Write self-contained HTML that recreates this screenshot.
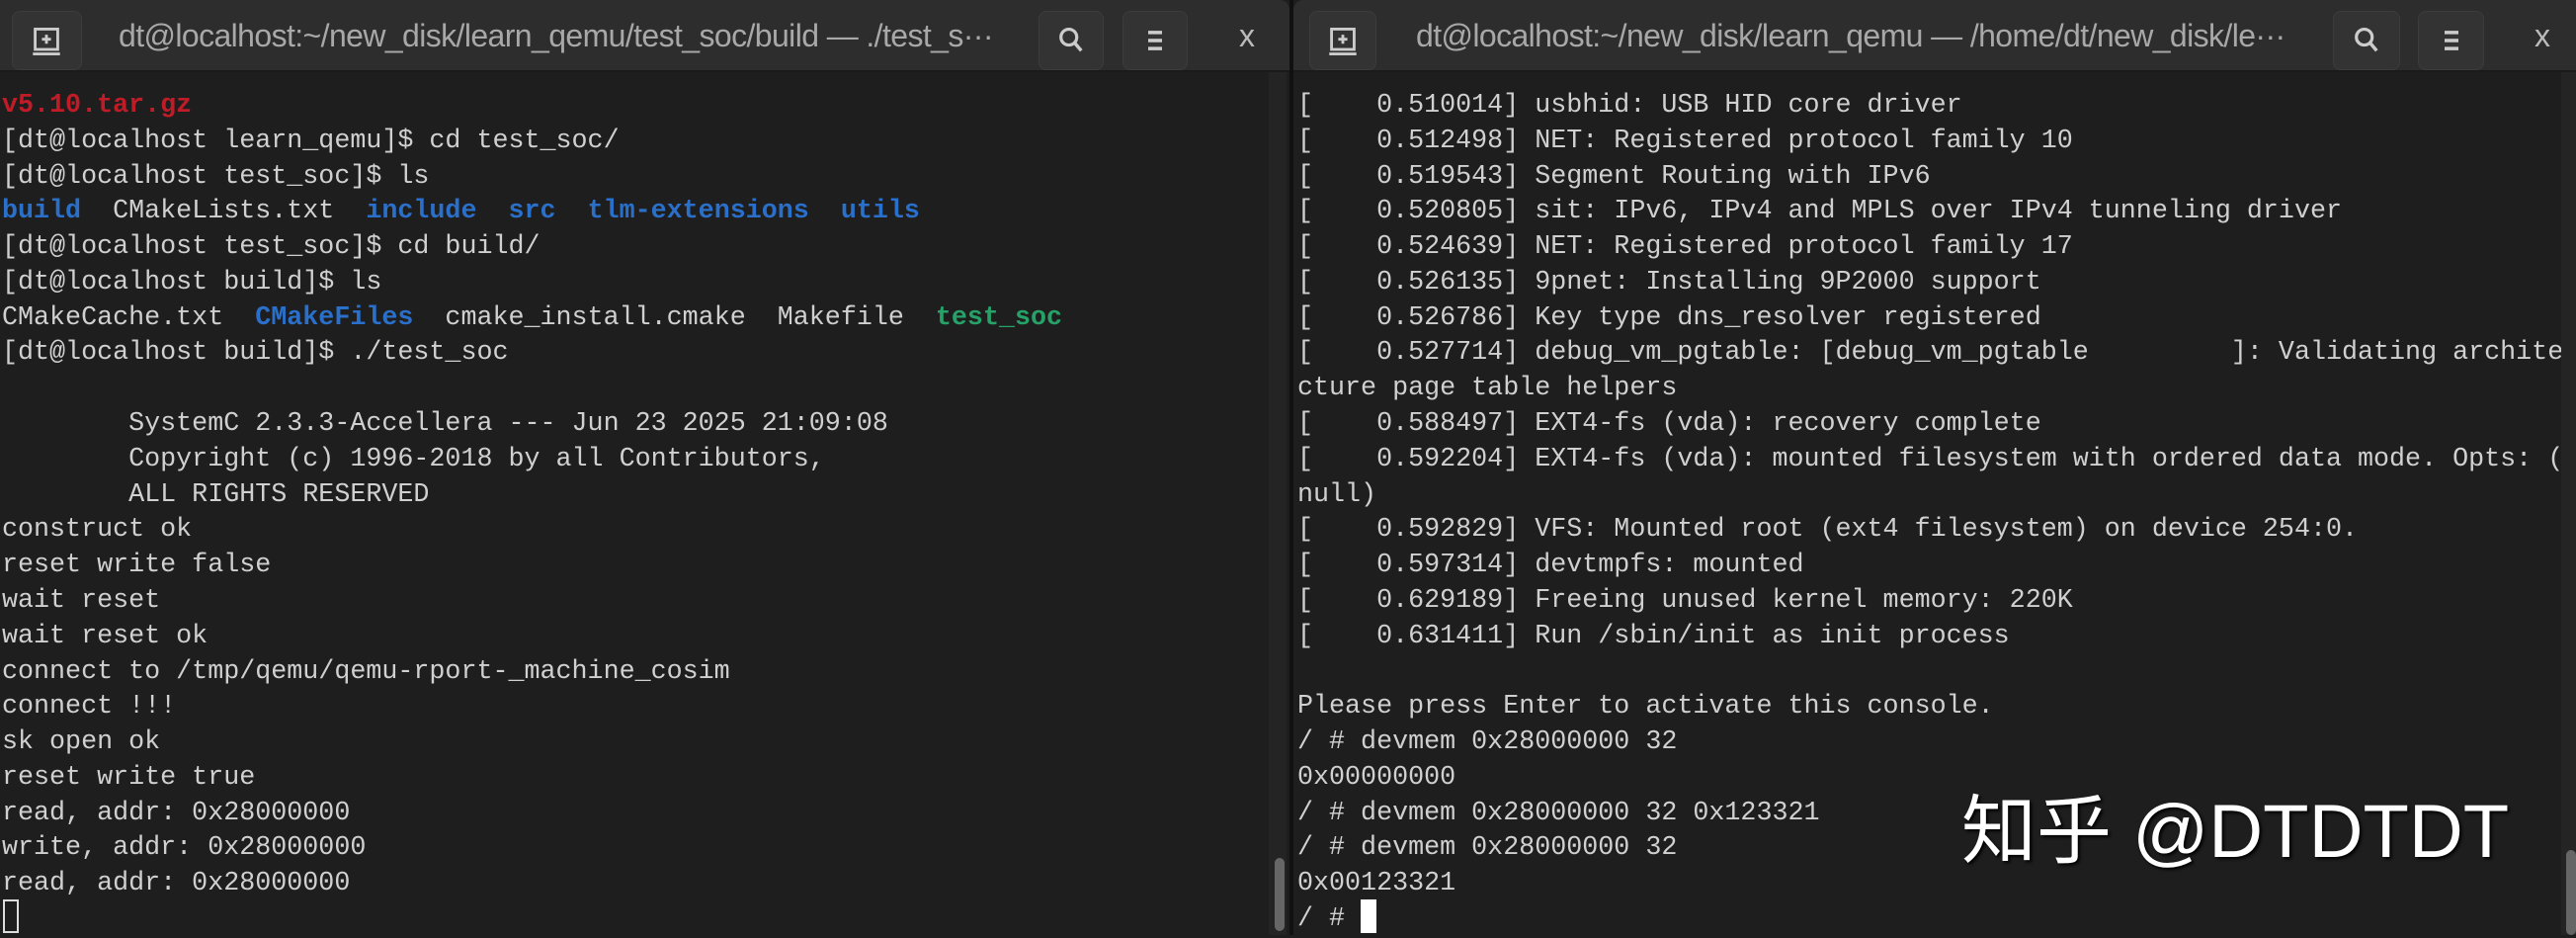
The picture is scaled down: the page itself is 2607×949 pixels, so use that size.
<!DOCTYPE html>
<html><head><meta charset="utf-8">
<style>
*{margin:0;padding:0;box-sizing:border-box}
body{width:2607px;height:946px;background:#1e1e1e;overflow:hidden;position:relative;font-family:"Liberation Mono",monospace}
.hdr{position:absolute;top:0;height:73px;background:#2d2d2d;border-bottom:2px solid #1a1a1a}
.btn{position:absolute;top:11px;height:60px;border:1px solid #3c3c3c;border-radius:8px;background:#333;}
.title{position:absolute;top:0;line-height:73px;font-family:"Liberation Sans",sans-serif;font-size:32px;color:#a8a8a8;white-space:nowrap;letter-spacing:-0.6px}
.x{position:absolute;top:0;line-height:73px;font-family:"Liberation Sans",sans-serif;font-size:32px;color:#bbb}
.term{position:absolute;top:90px;font-size:26.7px;line-height:35.78px;color:#d0d0d0;white-space:pre}
.r{color:#c01c28;font-weight:bold}.b{color:#2a6fc9;font-weight:bold}.g{color:#26a269;font-weight:bold}
svg{position:absolute}
</style></head><body>
<!-- left window -->
<div class="hdr" style="left:0;width:1305px;border-top-right-radius:10px"></div>
<div class="btn" style="left:12px;width:71px"></div>
<svg style="left:31px;top:26px" width="32" height="32" viewBox="0 0 28 28"><rect x="4" y="3" width="20" height="18" fill="none" stroke="#ccc" stroke-width="2.5"/><line x1="2" y1="25" x2="26" y2="25" stroke="#ccc" stroke-width="2.5"/><path d="M14 8v8M10 12h8" stroke="#ccc" stroke-width="2.5"/></svg>
<div class="title" style="left:120px">dt@localhost:~/new_disk/learn_qemu/test_soc/build — ./test_s···</div>
<div class="btn" style="left:1051px;width:66px"></div>
<svg style="left:1068px;top:25px" width="32" height="32" viewBox="0 0 28 28"><circle cx="12" cy="11" r="7" fill="none" stroke="#ccc" stroke-width="2.8"/><path d="M17 16l6 7" stroke="#ccc" stroke-width="3"/></svg>
<div class="btn" style="left:1136px;width:66px"></div>
<svg style="left:1155px;top:27px" width="28" height="28" viewBox="0 0 24 24"><path d="M6 5h12M6 12h12M6 19h12" stroke="#ccc" stroke-width="3"/></svg>
<div class="x" style="left:1254px">x</div>
<div class="term" style="left:2px"><span class="r">v5.10.tar.gz</span>
[dt@localhost learn_qemu]$ cd test_soc/
[dt@localhost test_soc]$ ls
<span class="b">build</span>  CMakeLists.txt  <span class="b">include</span>  <span class="b">src</span>  <span class="b">tlm-extensions</span>  <span class="b">utils</span>
[dt@localhost test_soc]$ cd build/
[dt@localhost build]$ ls
CMakeCache.txt  <span class="b">CMakeFiles</span>  cmake_install.cmake  Makefile  <span class="g">test_soc</span>
[dt@localhost build]$ ./test_soc

        SystemC 2.3.3-Accellera --- Jun 23 2025 21:09:08
        Copyright (c) 1996-2018 by all Contributors,
        ALL RIGHTS RESERVED
construct ok
reset write false
wait reset
wait reset ok
connect to /tmp/qemu/qemu-rport-_machine_cosim
connect !!!
sk open ok
reset write true
read, addr: 0x28000000
write, addr: 0x28000000
read, addr: 0x28000000
</div>
<div style="position:absolute;left:3px;top:910px;width:16px;height:34px;border:2px solid #ddd"></div>
<div style="position:absolute;left:1284px;top:73px;width:18px;height:873px;background:#242424"></div>
<div style="position:absolute;left:1290px;top:868px;width:10px;height:74px;background:#666;border-radius:5px"></div>
<div style="position:absolute;left:1305px;top:0;width:4px;height:946px;background:#111"></div>
<!-- right window -->
<div class="hdr" style="left:1309px;width:1298px;border-top-left-radius:10px"></div>
<div class="btn" style="left:1325px;width:68px"></div>
<svg style="left:1343px;top:26px" width="32" height="32" viewBox="0 0 28 28"><rect x="4" y="3" width="20" height="18" fill="none" stroke="#ccc" stroke-width="2.5"/><line x1="2" y1="25" x2="26" y2="25" stroke="#ccc" stroke-width="2.5"/><path d="M14 8v8M10 12h8" stroke="#ccc" stroke-width="2.5"/></svg>
<div class="title" style="left:1433px">dt@localhost:~/new_disk/learn_qemu — /home/dt/new_disk/le···</div>
<div class="btn" style="left:2361px;width:68px"></div>
<svg style="left:2379px;top:25px" width="32" height="32" viewBox="0 0 28 28"><circle cx="12" cy="11" r="7" fill="none" stroke="#ccc" stroke-width="2.8"/><path d="M17 16l6 7" stroke="#ccc" stroke-width="3"/></svg>
<div class="btn" style="left:2447px;width:67px"></div>
<svg style="left:2467px;top:27px" width="28" height="28" viewBox="0 0 24 24"><path d="M6 5h12M6 12h12M6 19h12" stroke="#ccc" stroke-width="3"/></svg>
<div class="x" style="left:2565px">x</div>
<div class="term" style="left:1313px">[    0.510014] usbhid: USB HID core driver
[    0.512498] NET: Registered protocol family 10
[    0.519543] Segment Routing with IPv6
[    0.520805] sit: IPv6, IPv4 and MPLS over IPv4 tunneling driver
[    0.524639] NET: Registered protocol family 17
[    0.526135] 9pnet: Installing 9P2000 support
[    0.526786] Key type dns_resolver registered
[    0.527714] debug_vm_pgtable: [debug_vm_pgtable         ]: Validating archite
cture page table helpers
[    0.588497] EXT4-fs (vda): recovery complete
[    0.592204] EXT4-fs (vda): mounted filesystem with ordered data mode. Opts: (
null)
[    0.592829] VFS: Mounted root (ext4 filesystem) on device 254:0.
[    0.597314] devtmpfs: mounted
[    0.629189] Freeing unused kernel memory: 220K
[    0.631411] Run /sbin/init as init process

Please press Enter to activate this console.
/ # devmem 0x28000000 32
0x00000000
/ # devmem 0x28000000 32 0x123321
/ # devmem 0x28000000 32
0x00123321
/ # </div>
<div style="position:absolute;left:1377px;top:910px;width:16px;height:34px;background:#fff"></div>
<div style="position:absolute;left:2592px;top:73px;width:15px;height:873px;background:#242424"></div>
<div style="position:absolute;left:2597px;top:860px;width:10px;height:86px;background:#666;border-radius:5px"></div>
<div style="position:absolute;left:1985px;top:792px;font-family:'Liberation Sans','Noto Sans CJK SC',sans-serif;font-size:76px;line-height:100px;color:#fff;white-space:nowrap;text-shadow:2px 2px 3px #000">知乎 @DTDTDT</div>
</body></html>
